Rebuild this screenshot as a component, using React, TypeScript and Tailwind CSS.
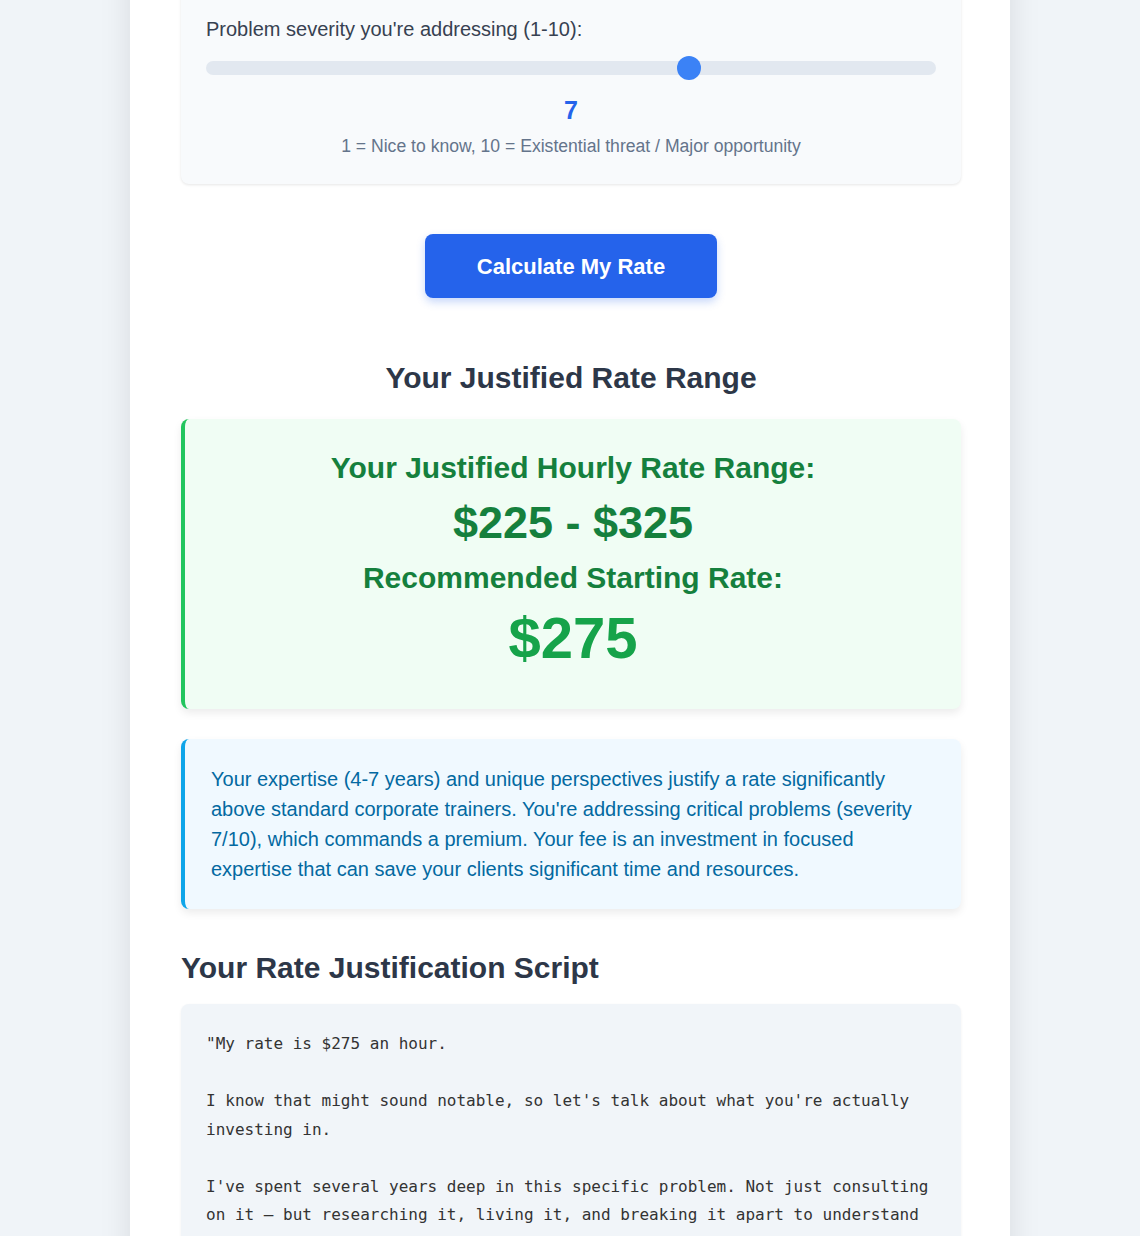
import React from "react";

const severity = 7;

const script = `"My rate is $275 an hour.

I know that might sound notable, so let's talk about what you're actually investing in.

I've spent several years deep in this specific problem. Not just consulting on it – but researching it, living it, and breaking it apart to understand the core reasons it keeps happening and what actually fixes it for good.`;

export default function App() {
  const pct = (severity - 1) / 9;

  return (
    <div className="h-[1236px] overflow-hidden bg-[#f0f4f8] font-['Liberation_Sans',Arial,sans-serif]">
      <div className="mx-auto w-[880px] bg-white pl-[51px] pr-[49px] pb-10 shadow-[0_0_30px_rgba(0,0,0,0.1)]">
        {/* severity card, top part is scrolled off */}
        <div className="-mt-[40px] rounded-lg bg-[#f8fafc] px-[25px] pt-[58px] pb-[28px] shadow-[0_1px_3px_rgba(0,0,0,0.1)]">
          <label className="block text-[20px] leading-[23px] text-[#374151]">
            Problem severity you're addressing (1-10):
          </label>
          <div className="relative mt-[20px] h-[14px] rounded-full bg-[#e2e8f0]">
            <div
              className="absolute top-1/2 h-6 w-6 -translate-y-1/2 rounded-full bg-[#3b82f6]"
              style={{ left: `calc(${pct} * (100% - 24px))` }}
            />
          </div>
          <div className="mt-[21px] text-center text-[25px] font-bold leading-[28px] text-[#2563eb]">{severity}</div>
          <p className="mt-[12px] text-center text-[17.6px] leading-[20px] text-[#64748b]">
            1 = Nice to know, 10 = Existential threat / Major opportunity
          </p>
        </div>

        <div className="mt-[50px] flex justify-center">
          <button className="h-[64px] rounded-lg bg-[#2563eb] px-[52px] text-[22px] font-bold text-white shadow-[0_4px_8px_rgba(37,99,235,0.25)]">
            Calculate My Rate
          </button>
        </div>

        <h2 className="mt-[63px] text-center text-[30px] font-bold leading-[34px] text-[#2d3748]">
          Your Justified Rate Range
        </h2>

        <div className="mt-[24px] flex flex-col items-center rounded-lg border-l-4 border-[#22c55e] bg-[#f0fdf4] pt-[32px] pb-[38px] shadow-[0_4px_8px_rgba(0,0,0,0.08)]">
          <h3 className="text-[30px] font-bold leading-[34px] text-[#15803d]">Your Justified Hourly Rate Range:</h3>
          <div className="mt-[12px] text-[45px] font-bold leading-[52px] text-[#15803d]">$225 - $325</div>
          <h3 className="mt-[12px] text-[30px] font-bold leading-[34px] text-[#15803d]">Recommended Starting Rate:</h3>
          <div className="mt-[10px] text-[58px] font-bold leading-[66px] text-[#16a34a]">$275</div>
        </div>

        <div className="mt-[30px] rounded-lg border-l-4 border-[#0ea5e9] bg-[#f0f9ff] py-[25px] pl-[26px] pr-[30px] shadow-[0_4px_8px_rgba(0,0,0,0.08)]">
          <p className="text-[20px] leading-[30px] text-[#0369a1]">
            Your expertise (4-7 years) and unique perspectives justify a rate significantly above standard corporate
            trainers. You're addressing critical problems (severity 7/10), which commands a premium. Your fee is an
            investment in focused expertise that can save your clients significant time and resources.
          </p>
        </div>

        <h2 className="mt-[42px] text-[30px] font-bold leading-[34px] text-[#2d3748]">Your Rate Justification Script</h2>

        <div className="mt-[19px] rounded-lg bg-[#f1f5f9] px-[25px] pt-[26px] pb-[25px] shadow-[0_1px_3px_rgba(0,0,0,0.06)]">
          <pre className="whitespace-pre-wrap font-['DejaVu_Sans_Mono',monospace] text-[16px] leading-[28.5px] text-[#333]">
            {script}
          </pre>
        </div>
      </div>
    </div>
  );
}
